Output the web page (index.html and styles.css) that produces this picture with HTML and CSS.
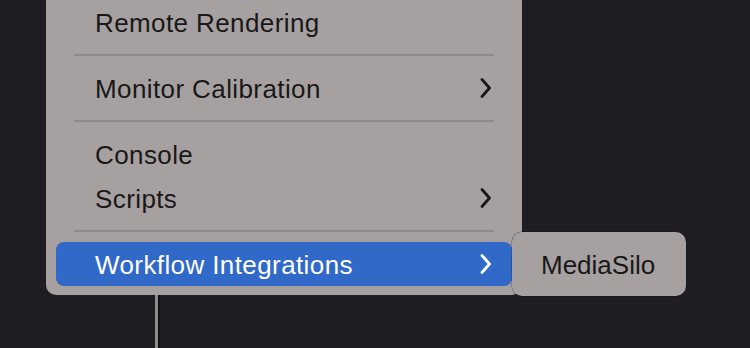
FILE: index.html
```html
<!DOCTYPE html>
<html>
<head>
<meta charset="utf-8">
<link rel="stylesheet" href="styles.css">
</head>
<body>
<div class="menu">
  <div class="item"><span>Remote Rendering</span></div>
  <div class="sep"></div>
  <div class="item"><span>Monitor Calibration</span>
    <svg class="chev" width="12" height="20" viewBox="0 0 12 20"><path d="M2 1.5 L9.5 10 L2 18.5" fill="none" stroke="currentColor" stroke-width="2.8" stroke-linecap="round" stroke-linejoin="round"/></svg>
  </div>
  <div class="sep"></div>
  <div class="item"><span>Console</span></div>
  <div class="item"><span>Scripts</span>
    <svg class="chev" width="12" height="20" viewBox="0 0 12 20"><path d="M2 1.5 L9.5 10 L2 18.5" fill="none" stroke="currentColor" stroke-width="2.8" stroke-linecap="round" stroke-linejoin="round"/></svg>
  </div>
  <div class="sep"></div>
  <div class="item active"><span>Workflow Integrations</span>
    <svg class="chev" width="12" height="20" viewBox="0 0 12 20"><path d="M2 1.5 L9.5 10 L2 18.5" fill="none" stroke="currentColor" stroke-width="2.8" stroke-linecap="round" stroke-linejoin="round"/></svg>
  </div>
  <div class="submenu"><span>MediaSilo</span></div>
</div>
<div class="rail"></div>
</body>
</html>
```
FILE: styles.css
```css
html, body {
  margin: 0;
  padding: 0;
  background: #1e1d22;
  overflow: hidden;
  height: 348px;
}
body {
  font-family: "Liberation Sans", Arial, sans-serif;
  font-size: 26px;
  color: #191818;
}
.menu {
  position: relative;
  margin-left: 46px;
  width: 476px;
  box-sizing: border-box;
  padding: 0 10px 9px;
  background: #a6a1a0;
  border-radius: 0 0 10px 10px;
}
.item {
  height: 44px;
  box-sizing: border-box;
  display: flex;
  align-items: center;
  justify-content: space-between;
  padding-left: 39px;
  padding-right: 20px;
  border-radius: 8px;
}
.item span {
  line-height: 44px;
  padding-top: 2px;
  letter-spacing: 0.4px;
}
.item.active {
  background: #3069c8;
  color: #ffffff;
}
.chev {
  display: block;
  color: #191818;
}
.item.active .chev {
  color: #ffffff;
}
.sep {
  height: 22px;
  margin: 0 18px;
  display: flex;
  align-items: center;
}
.sep::before {
  content: "";
  display: block;
  width: 100%;
  height: 2px;
  background: #8e8988;
}
.submenu {
  position: absolute;
  left: 466px;
  top: 232px;
  width: 174px;
  height: 64px;
  box-sizing: border-box;
  padding-left: 29px;
  padding-top: 2px;
  display: flex;
  align-items: center;
  background: #a6a1a0;
  border-radius: 10px;
  box-shadow: 0 0 0 0.5px rgba(0,0,0,0.4);
}
.rail {
  margin-left: 155px;
  width: 3px;
  height: 60px;
  background: #8d8d8d;
  border-right: 2px solid #111113;
}
```
